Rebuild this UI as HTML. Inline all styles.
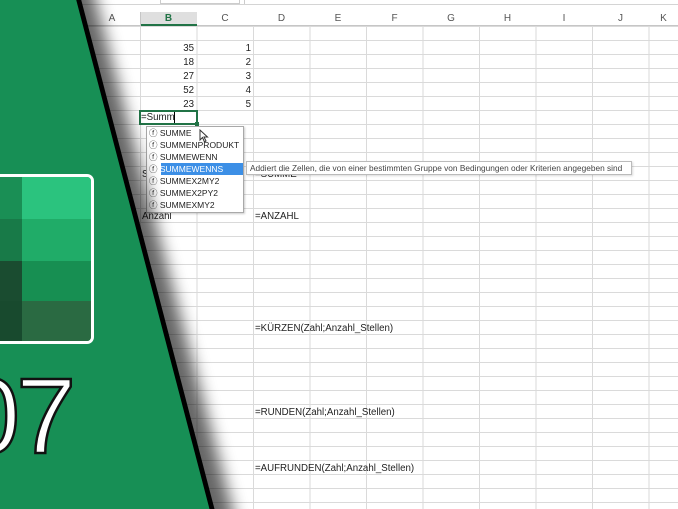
<!DOCTYPE html>
<html><head><meta charset="utf-8"><style>
*{margin:0;padding:0;box-sizing:border-box}
html,body{width:678px;height:509px;overflow:hidden}
body{background:#fff;position:relative;font-family:"Liberation Sans",Arial,sans-serif}
#w{position:absolute;left:0;top:0;width:678px;height:509px;overflow:hidden}
.a{position:absolute}
.t{position:absolute;font-size:9.7px;color:#222;line-height:14px;white-space:nowrap;margin-top:2px}
.hd{position:absolute;top:12px;height:14px;font-size:10px;color:#555;text-align:center;line-height:14px}
</style></head><body><div id="w">
<div class="a" style="left:0;top:4px;width:678px;height:1px;background:#d4d4d4"></div>
<div class="a" style="left:160px;top:0;width:80px;height:4px;border:1px solid #ccc;border-top:none"></div>
<div class="a" style="left:244px;top:0;width:434px;height:4px;border-left:1px solid #ccc"></div>
<div class="a" style="left:0;top:12px;width:678px;height:14px;background:#fff;border-bottom:1px solid #c6c6c6"></div>
<div class="a" style="left:140px;top:12px;width:57px;height:14px;background:#dfdfdf;border-bottom:2px solid #217346"></div>
<div class="hd" style="left:84px;width:56px">A</div>
<div class="hd" style="left:140px;width:57px;font-weight:bold;color:#217346">B</div>
<div class="hd" style="left:197px;width:56px">C</div>
<div class="hd" style="left:253px;width:57px">D</div>
<div class="hd" style="left:310px;width:56px">E</div>
<div class="hd" style="left:366px;width:57px">F</div>
<div class="hd" style="left:423px;width:56px">G</div>
<div class="hd" style="left:479px;width:57px">H</div>
<div class="hd" style="left:536px;width:56px">I</div>
<div class="hd" style="left:592px;width:57px">J</div>
<div class="hd" style="left:649px;width:29px">K</div>
<div class="a" style="left:0;top:26px;width:678px;height:483px;
background-image:linear-gradient(to bottom,#dadada 1px,transparent 1px),
linear-gradient(to right,#dadada 1px,transparent 1px);
background-size:678px 14px,56.5px 483px;background-position:0 0,27px 0"></div>
<div class="a" style="left:140px;top:12px;width:1px;height:14px;background:#c6c6c6"></div>
<div class="t" style="left:140px;top:40px;width:54px;text-align:right">35</div>
<div class="t" style="left:140px;top:54px;width:54px;text-align:right">18</div>
<div class="t" style="left:140px;top:68px;width:54px;text-align:right">27</div>
<div class="t" style="left:140px;top:82px;width:54px;text-align:right">52</div>
<div class="t" style="left:140px;top:96px;width:54px;text-align:right">23</div>
<div class="t" style="left:197px;top:40px;width:54px;text-align:right">1</div>
<div class="t" style="left:197px;top:54px;width:54px;text-align:right">2</div>
<div class="t" style="left:197px;top:68px;width:54px;text-align:right">3</div>
<div class="t" style="left:197px;top:82px;width:54px;text-align:right">4</div>
<div class="t" style="left:197px;top:96px;width:54px;text-align:right">5</div>
<div class="a" style="left:139px;top:110px;width:59px;height:15px;border:2px solid #217346;background:#fff"></div>
<div class="a" style="left:195px;top:122px;width:4px;height:4px;background:#217346"></div>
<div class="t" style="left:141px;top:109px">=Summ</div>
<div class="a" style="left:174px;top:112px;width:1px;height:11px;background:#000"></div>
<div class="t" style="left:142px;top:166px">S</div>
<div class="t" style="left:255px;top:166px">=SUMME</div>
<div class="t" style="left:142px;top:208px">Anzahl</div>
<div class="t" style="left:255px;top:208px">=ANZAHL</div>
<div class="t" style="left:255px;top:320px">=KÜRZEN(Zahl;Anzahl_Stellen)</div>
<div class="t" style="left:255px;top:404px">=RUNDEN(Zahl;Anzahl_Stellen)</div>
<div class="t" style="left:255px;top:460px">=AUFRUNDEN(Zahl;Anzahl_Stellen)</div>
<div class="a" style="left:146px;top:126px;width:98px;height:87px;background:#fff;border:1px solid #a9a9a9;box-shadow:1px 1px 2px rgba(0,0,0,.2)"></div>
<div class="a" style="left:161px;top:163px;width:82px;height:12px;background:#3c8fe6"></div>
<div class="a" style="left:149px;top:127px;font-size:8.5px;line-height:12px;color:#222;white-space:nowrap">
<div>ⓕ SUMME</div><div>ⓕ SUMMENPRODUKT</div><div>ⓕ SUMMEWENN</div><div>ⓕ <span style="color:#fff">SUMMEWENNS</span></div><div>ⓕ SUMMEX2MY2</div><div>ⓕ SUMMEX2PY2</div><div>ⓕ SUMMEXMY2</div>
</div>
<svg class="a" style="left:199px;top:129px" width="10" height="14" viewBox="0 0 10 14"><path d="M1 1 L1 11 L3.5 8.5 L5.5 13 L7 12 L5 8 L8.5 8 Z" fill="#fff" stroke="#333" stroke-width="1"/></svg>
<div class="a" style="left:246px;top:161px;width:386px;height:14px;background:#fff;border:1px solid #bbb;font-size:8.3px;line-height:12px;color:#444;padding-left:3px;white-space:nowrap;overflow:hidden;box-shadow:1px 1px 2px rgba(0,0,0,.15)">Addiert die Zellen, die von einer bestimmten Gruppe von Bedingungen oder Kriterien angegeben sind</div>
<svg class="a" style="left:0;top:0" width="678" height="509" viewBox="0 0 678 509">
<defs><filter id="b" x="-50%" y="-10%" width="200%" height="120%"><feGaussianBlur stdDeviation="8"/></filter></defs>
<polygon points="0,-20 78,-20 226,530 0,530" fill="#000" opacity="0.6" filter="url(#b)" transform="translate(12,0)"/>
<polygon points="0,-20 76,-20 220,530 0,530" fill="#000"/>
<polygon points="0,-20 71,-20 215,530 0,530" fill="#178f55"/>
</svg>
<div class="a" style="left:-10px;top:174px;width:104px;height:170px;border:3px solid #fff;border-radius:7px;overflow:hidden">
<div class="a" style="left:0;top:0;width:29px;height:42px;background:#1a8f55"></div>
<div class="a" style="left:29px;top:0;width:80px;height:42px;background:#2bc37e"></div>
<div class="a" style="left:0;top:42px;width:29px;height:42px;background:#187a48"></div>
<div class="a" style="left:29px;top:42px;width:80px;height:42px;background:#20ac68"></div>
<div class="a" style="left:0;top:84px;width:29px;height:40px;background:#1a4c30"></div>
<div class="a" style="left:29px;top:84px;width:80px;height:40px;background:#178f52"></div>
<div class="a" style="left:0;top:124px;width:29px;height:50px;background:#184a2e"></div>
<div class="a" style="left:29px;top:124px;width:80px;height:50px;background:#2a6a42"></div>
</div>
<div class="a" style="left:-40px;top:360px;font-size:108px;line-height:112px;color:#fff;-webkit-text-stroke:2.5px #111;font-family:'Liberation Sans',sans-serif;letter-spacing:-4px;white-space:nowrap">07</div>
</div></body></html>
